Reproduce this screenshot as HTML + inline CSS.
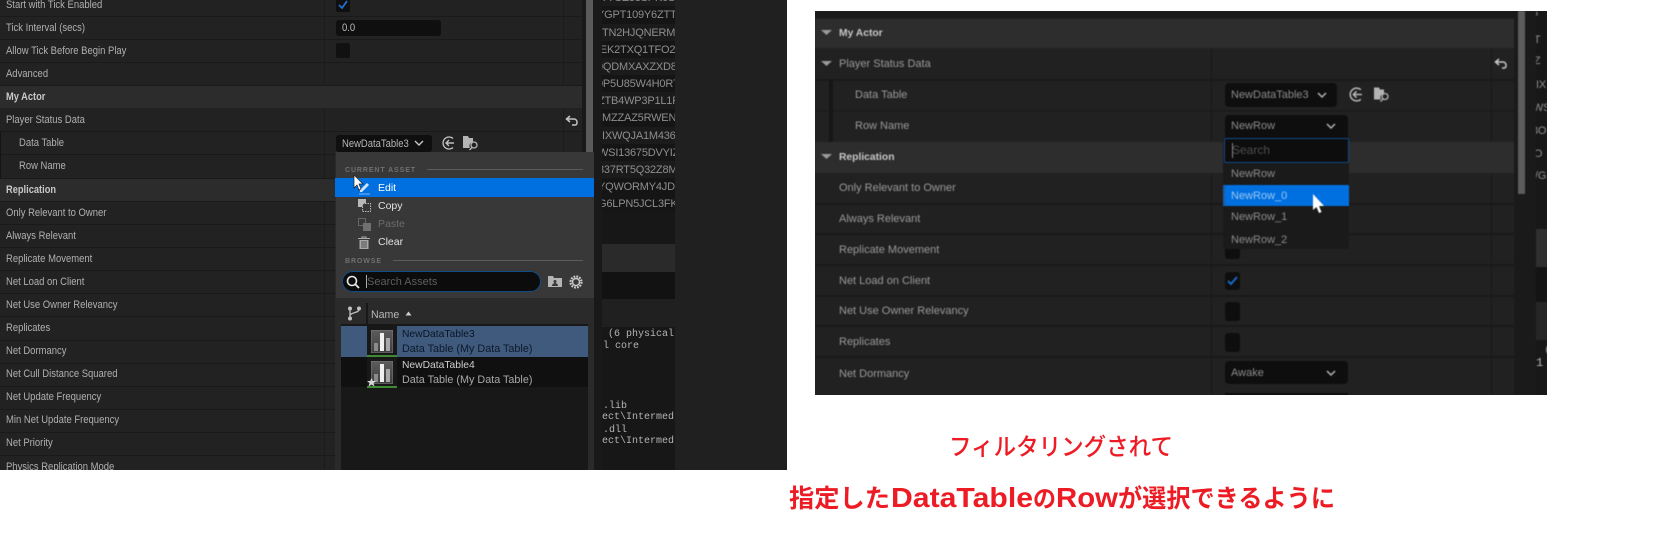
<!DOCTYPE html>
<html lang="ja"><head><meta charset="utf-8"><title>DataTable Row</title>
<style>
html,body{margin:0;padding:0;background:#fff;width:1657px;height:548px;overflow:hidden}
.layer{position:absolute;left:0;top:0;width:1657px;height:548px;font-family:"Liberation Sans","Noto Sans CJK JP",sans-serif}
#L{clip-path:inset(0 870px 78px 0);filter:blur(.35px);background:#222;font-size:11px;color:#b0b0b0}
#R{clip-path:inset(11px 110px 153px 815px);filter:blur(.6px);background:#212121;font-size:11px;color:#9a9a9a}
.b,.t,svg.i{position:absolute}
.t{white-space:nowrap;line-height:0;height:0}
#L .t{transform:scaleX(.86);transform-origin:0 0;margin-top:.7px}
#L .t.n{transform:none;margin-top:0}
#L .s{font-size:10.8px}
#R .s{font-size:10.3px}
.s{font-weight:bold;color:#c8c8c8}
.h{font-size:7px;font-weight:bold;letter-spacing:.9px;color:#707070}
.m{color:#e2e2e2;font-size:10.5px}
.lg{font-size:11px;color:#8e8e8e;letter-spacing:-.2px}
.mono{font-family:"Liberation Mono",monospace;font-size:10px;color:#b4b4b4}
#R .v{color:#8c8c8c}
</style></head><body>

<div class="layer" id="L">
<!-- rows -->
<div class="b" style="left:0;top:85px;width:582px;height:23px;background:#2c2c2c"></div>
<div class="b" style="left:0;top:178px;width:582px;height:23px;background:#2c2c2c"></div>
<div class="b" style="left:0;top:16px;width:582px;height:1px;background:#1a1a1a"></div>
<div class="b" style="left:0;top:39px;width:582px;height:1px;background:#1a1a1a"></div>
<div class="b" style="left:0;top:62px;width:582px;height:1px;background:#1a1a1a"></div>
<div class="b" style="left:0;top:85px;width:582px;height:1px;background:#1a1a1a"></div>
<div class="b" style="left:0;top:131px;width:582px;height:1px;background:#1a1a1a"></div>
<div class="b" style="left:0;top:154px;width:582px;height:1px;background:#1a1a1a"></div>
<div class="b" style="left:0;top:178px;width:582px;height:1px;background:#1a1a1a"></div>
<div class="b" style="left:0;top:201px;width:582px;height:1px;background:#1a1a1a"></div>
<div class="b" style="left:0;top:224px;width:582px;height:1px;background:#1a1a1a"></div>
<div class="b" style="left:0;top:247px;width:582px;height:1px;background:#1a1a1a"></div>
<div class="b" style="left:0;top:270px;width:582px;height:1px;background:#1a1a1a"></div>
<div class="b" style="left:0;top:293px;width:582px;height:1px;background:#1a1a1a"></div>
<div class="b" style="left:0;top:316px;width:582px;height:1px;background:#1a1a1a"></div>
<div class="b" style="left:0;top:340px;width:582px;height:1px;background:#1a1a1a"></div>
<div class="b" style="left:0;top:363px;width:582px;height:1px;background:#1a1a1a"></div>
<div class="b" style="left:0;top:386px;width:582px;height:1px;background:#1a1a1a"></div>
<div class="b" style="left:0;top:409px;width:582px;height:1px;background:#1a1a1a"></div>
<div class="b" style="left:0;top:432px;width:582px;height:1px;background:#1a1a1a"></div>
<div class="b" style="left:0;top:455px;width:582px;height:1px;background:#1a1a1a"></div>
<div class="b" style="left:324px;top:0;width:1px;height:85px;background:#1b1b1b"></div>
<div class="b" style="left:324px;top:108px;width:1px;height:70px;background:#1b1b1b"></div>
<div class="b" style="left:324px;top:201px;width:1px;height:270px;background:#1b1b1b"></div>
<div class="b" style="left:563px;top:0;width:1px;height:85px;background:#1b1b1b"></div>
<div class="b" style="left:563px;top:108px;width:1px;height:46px;background:#1b1b1b"></div>
<div class="b" style="left:0;top:132px;width:1px;height:46px;background:#141414"></div>
<div class="t" style="left:6px;top:4px">Start with Tick Enabled</div>
<div class="t" style="left:6px;top:27px">Tick Interval (secs)</div>
<div class="t" style="left:6px;top:50px">Allow Tick Before Begin Play</div>
<div class="t" style="left:6px;top:73px">Advanced</div>
<div class="t s" style="left:6px;top:96.5px">My Actor</div>
<div class="t" style="left:6px;top:119.5px">Player Status Data</div>
<div class="t" style="left:19px;top:142.5px">Data Table</div>
<div class="t" style="left:19px;top:165.5px">Row Name</div>
<div class="t s" style="left:6px;top:189px">Replication</div>
<div class="t" style="left:6px;top:212px">Only Relevant to Owner</div>
<div class="t" style="left:6px;top:235px">Always Relevant</div>
<div class="t" style="left:6px;top:258px">Replicate Movement</div>
<div class="t" style="left:6px;top:281px">Net Load on Client</div>
<div class="t" style="left:6px;top:304px">Net Use Owner Relevancy</div>
<div class="t" style="left:6px;top:327px">Replicates</div>
<div class="t" style="left:6px;top:350px">Net Dormancy</div>
<div class="t" style="left:6px;top:373.5px">Net Cull Distance Squared</div>
<div class="t" style="left:6px;top:396.5px">Net Update Frequency</div>
<div class="t" style="left:6px;top:419.5px">Min Net Update Frequency</div>
<div class="t" style="left:6px;top:442.5px">Net Priority</div>
<div class="t" style="left:6px;top:466px">Physics Replication Mode</div>
<!-- value widgets -->
<div class="b" style="left:336px;top:-3px;width:14px;height:15px;background:#0f0f0f;border-radius:2px"></div>
<svg class="i" style="left:337px;top:-1px" width="12" height="12" viewBox="0 0 12 12"><path d="M2 6l3 3 5-7" fill="none" stroke="#1f70d0" stroke-width="1.8"/></svg>
<div class="b" style="left:336px;top:20px;width:105px;height:16px;background:#0f0f0f;border-radius:3px"></div>
<div class="t" style="left:342px;top:27.5px;color:#bdbdbd">0.0</div>
<div class="b" style="left:336px;top:43px;width:14px;height:15px;background:#111;border-radius:2px"></div>
<div class="b" style="left:336px;top:135px;width:96px;height:17px;background:#0f0f0f;border-radius:3px"></div>
<div class="t" style="left:342px;top:143px;color:#b6b6b6">NewDataTable3</div>
<svg class="i" style="left:413px;top:139px" width="12" height="9" viewBox="0 0 12 9"><path d="M2 2l4 4 4-4" fill="none" stroke="#c8c8c8" stroke-width="1.4"/></svg>
<svg class="i" style="left:440px;top:135px" width="16" height="16" viewBox="0 0 16 16"><path d="M13 3.500A6 6 0 1 0 13 12.500" fill="none" stroke="#c0c0c0" stroke-width="1.3"/><path d="M14 8H6M9 5L6 8l3 3" fill="none" stroke="#c0c0c0" stroke-width="1.4"/></svg>
<svg class="i" style="left:462px;top:135px" width="17" height="17" viewBox="0 0 17 17"><path d="M1 1h5l1 2h4v4a4 4 0 0 0-3 6H1z" fill="#b4b4b4"/><circle cx="12" cy="10" r="3" fill="none" stroke="#b4b4b4" stroke-width="1.3"/><path d="M10 12.500L7.500 15" stroke="#b4b4b4" stroke-width="1.3"/></svg>
<svg class="i" style="left:565px;top:115px" width="14" height="12" viewBox="0 0 14 12"><path d="M5 1L1.500 4 5 7" fill="none" stroke="#c4c4c4" stroke-width="1.500"/><path d="M2 4h7a3 3 0 0 1 3 3v1a2 2 0 0 1-2 2H7" fill="none" stroke="#c4c4c4" stroke-width="1.500"/></svg>
<!-- scrollbar & log -->
<div class="b" style="left:582px;top:0;width:20px;height:470px;background:#191919"></div>
<div class="b" style="left:586px;top:0;width:7px;height:470px;background:#5a5a5a"></div>
<div class="b" style="left:675px;top:0;width:112px;height:470px;background:#202020"></div>
<div class="b" style="left:602px;top:0;width:73px;height:212px;background:#151515;overflow:hidden">
<div class="b" style="left:0;top:0;width:73px;height:6px;background:#1b1b1b"></div>
<div class="b" style="left:0;top:24px;width:73px;height:17px;background:#1b1b1b"></div>
<div class="b" style="left:0;top:58px;width:73px;height:17px;background:#1b1b1b"></div>
<div class="b" style="left:0;top:92px;width:73px;height:17px;background:#1b1b1b"></div>
<div class="b" style="left:0;top:127px;width:73px;height:17px;background:#1b1b1b"></div>
<div class="b" style="left:0;top:161px;width:73px;height:17px;background:#1b1b1b"></div>
<div class="t n lg" style="left:-4px;top:-2px">ITTGZ83SPK6S</div>
<div class="t n lg" style="left:-5px;top:15px">YGPT109Y6ZTTX</div>
<div class="t n lg" style="left:0;top:33px">TN2HJQNERMIA</div>
<div class="t n lg" style="left:-5px;top:50px">IEK2TXQ1TFO2A</div>
<div class="t n lg" style="left:-5px;top:67px">9QDMXAXZXD8L</div>
<div class="t n lg" style="left:-5px;top:84px">0P5U85W4H0R7K</div>
<div class="t n lg" style="left:-4px;top:101px">ZTB4WP3P1L1FV</div>
<div class="t n lg" style="left:0;top:118px">MZZAZ5RWENNK</div>
<div class="t n lg" style="left:0;top:136px">IXWQJA1M436L</div>
<div class="t n lg" style="left:-4px;top:153px">WSI13675DVYIZA</div>
<div class="t n lg" style="left:-4px;top:170px">337RT5Q32Z8MA</div>
<div class="t n lg" style="left:-4px;top:187px">YQWORMY4JDCL</div>
<div class="t n lg" style="left:-4px;top:204px">G6LPN5JCL3FK</div>
</div>
<div class="b" style="left:602px;top:212px;width:73px;height:258px;background:#171717"></div>
<div class="b" style="left:602px;top:244px;width:73px;height:28px;background:#2a2a2a"></div>
<div class="b" style="left:602px;top:272px;width:73px;height:27px;background:#121212"></div>
<div class="b" style="left:602px;top:299px;width:73px;height:28px;background:#202020"></div>
<div class="b" style="left:602px;top:327px;width:73px;height:143px;overflow:hidden">
<div class="t n mono" style="left:6px;top:7.5px">(6 physical</div>
<div class="t n mono" style="left:1px;top:19.5px">l core</div>
<div class="t n mono" style="left:1px;top:79.5px">.lib</div>
<div class="t n mono" style="left:0;top:91px">ect\Intermed</div>
<div class="t n mono" style="left:1px;top:103.5px">.dll</div>
<div class="t n mono" style="left:0;top:115px">ect\Intermed</div>
</div>
<!-- popup -->
<div class="b" style="left:335px;top:152px;width:259px;height:318px;background:#383838;border-left:1px solid #2a2a2a;box-sizing:border-box"></div>
<div class="t n h" style="left:345px;top:170.5px">CURRENT ASSET</div>
<div class="b" style="left:427px;top:169px;width:156px;height:1px;background:#5c5c5c"></div>
<div class="b" style="left:335px;top:178px;width:259px;height:19px;background:#0070e0"></div>
<svg class="i" style="left:358px;top:181px" width="14" height="14" viewBox="0 0 14 14"><path d="M2 9l7-7 2 2-7 7H2z" fill="#cfe3fa"/><path d="M1 13h11" stroke="#7fb4ee" stroke-width="1"/></svg>
<div class="t n m" style="left:378px;top:188px;color:#fff">Edit</div>
<svg class="i" style="left:358px;top:199px" width="13" height="13" viewBox="0 0 13 13"><rect x="0" y="0" width="8" height="8" fill="#b8b8b8"/><rect x="4.500" y="4.500" width="8" height="8" fill="#383838" stroke="#b8b8b8" stroke-dasharray="1.500 1"/></svg>
<div class="t n m" style="left:378px;top:206px">Copy</div>
<svg class="i" style="left:358px;top:218px" width="13" height="13" viewBox="0 0 13 13"><rect x=".5" y=".5" width="7" height="7" fill="none" stroke="#666"/><rect x="5" y="5" width="8" height="8" fill="#707070"/></svg>
<div class="t n m" style="left:378px;top:224px;color:#6c6c6c">Paste</div>
<svg class="i" style="left:358px;top:236px" width="12" height="13" viewBox="0 0 12 13"><path d="M0 2.500h12M4 2.500V1h4v1.500" fill="none" stroke="#a8a8a8"/><path d="M1.500 4h9v9h-9z" fill="#a8a8a8"/><path d="M4 5v7M6 5v7M8 5v7" stroke="#383838" stroke-width=".8"/></svg>
<div class="t n m" style="left:378px;top:242px">Clear</div>
<div class="t n h" style="left:345px;top:261.5px">BROWSE</div>
<div class="b" style="left:393px;top:260px;width:190px;height:1px;background:#5c5c5c"></div>
<div class="b" style="left:342px;top:271px;width:199px;height:21px;background:#0c0c0c;border:1px solid #0f4a8a;border-radius:11px;box-sizing:border-box"></div>
<svg class="i" style="left:346px;top:275px" width="14" height="14" viewBox="0 0 14 14"><circle cx="6" cy="6" r="4.500" fill="none" stroke="#e8e8e8" stroke-width="1.600"/><path d="M9.500 9.500L13 13" stroke="#e8e8e8" stroke-width="1.800"/></svg>
<div class="b" style="left:366px;top:275px;width:1px;height:13px;background:#aaa"></div>
<div class="t n" style="left:367px;top:281.5px;color:#5e5e5e;font-size:11px">Search Assets</div>
<svg class="i" style="left:548px;top:275px" width="14" height="12" viewBox="0 0 14 12"><path d="M0 1h5l1 2h8v9H0z" fill="#b4b4b4"/><circle cx="7" cy="6.500" r="1.500" fill="#383838"/><path d="M4 11a3 3 0 0 1 6 0z" fill="#383838"/></svg>
<svg class="i" style="left:569px;top:275px" width="14" height="14" viewBox="0 0 14 14"><circle cx="7" cy="7" r="3.500" fill="none" stroke="#c8c8c8" stroke-width="1.500"/><circle cx="7" cy="7" r="5.500" fill="none" stroke="#c8c8c8" stroke-width="2.200" stroke-dasharray="1.800 1.100"/></svg>
<div class="b" style="left:336px;top:298px;width:258px;height:172px;background:#2a2a2a"></div>
<div class="b" style="left:341px;top:303px;width:247px;height:167px;background:#181818"></div>
<div class="b" style="left:341px;top:303px;width:25px;height:21px;background:#2a2a2a"></div>
<div class="b" style="left:368px;top:303px;width:220px;height:21px;background:#2a2a2a"></div>
<svg class="i" style="left:347px;top:306px" width="15" height="15" viewBox="0 0 15 15"><circle cx="3" cy="2.500" r="2" fill="#c0c0c0"/><circle cx="3" cy="12.500" r="2" fill="#c0c0c0"/><circle cx="12" cy="2.500" r="2" fill="#c0c0c0"/><path d="M3 3v8M12 3c0 4-6 3-9 6" fill="none" stroke="#c0c0c0" stroke-width="1.300"/></svg>
<div class="t n" style="left:371px;top:315px;color:#b8b8b8;font-size:10.6px">Name</div>
<svg class="i" style="left:405px;top:311px" width="7" height="5" viewBox="0 0 7 5"><path d="M.5 4.500L3.500.5l3 4z" fill="#cfcfcf"/></svg>
<div class="b" style="left:341px;top:326px;width:247px;height:31px;background:#3f5a7d"></div>
<div class="b" style="left:341px;top:357px;width:247px;height:30px;background:#101010"></div>
<div class="b" style="left:367px;top:326px;width:30px;height:31px;background:#181818"></div>
<div class="b" style="left:367px;top:357px;width:30px;height:30px;background:#181818"></div>
<div class="b" style="left:367px;top:355px;width:30px;height:2px;background:#3e8a33"></div>
<div class="b" style="left:367px;top:386px;width:30px;height:2px;background:#3e8a33"></div>
<svg class="i" style="left:371px;top:330px" width="22" height="23" viewBox="0 0 22 23"><defs><linearGradient id="g" x1="0" y1="0" x2="0" y2="1"><stop offset="0" stop-color="#5c5c5c"/><stop offset="1" stop-color="#3e3e3e"/></linearGradient></defs><rect width="22" height="23" fill="url(#g)" stroke="#7a7a7a"/><rect x="3" y="13" width="4" height="8" fill="#8a8a8a"/><rect x="9" y="3" width="4" height="18" fill="#f0f0f0"/><rect x="15" y="8" width="4" height="13" fill="#a8a8a8"/></svg>
<svg class="i" style="left:371px;top:361px" width="22" height="23" viewBox="0 0 22 23"><rect width="22" height="23" fill="url(#g)" stroke="#7a7a7a"/><rect x="3" y="13" width="4" height="8" fill="#8a8a8a"/><rect x="9" y="3" width="4" height="18" fill="#f0f0f0"/><rect x="15" y="8" width="4" height="13" fill="#a8a8a8"/></svg>
<svg class="i" style="left:367px;top:378px" width="9" height="9" viewBox="0 0 9 9"><path d="M4.500 0l1.300 3H9L6.500 5l1 3.500-3-2-3 2 1-3.500L0 3h3.200z" fill="#d8d8d8"/></svg>
<div class="t n" style="left:402px;top:335px;color:#0a1524;font-size:10.3px">NewDataTable3</div>
<div class="t n" style="left:402px;top:349px;color:#0e1a2b;font-size:10.8px">Data Table (My Data Table)</div>
<div class="t n" style="left:402px;top:366px;color:#d0d0d0;font-size:10.3px">NewDataTable4</div>
<div class="t n" style="left:402px;top:380px;color:#a8a8a8;font-size:10.8px">Data Table (My Data Table)</div>
<!-- cursor -->
<svg class="i" style="left:353px;top:174px" width="12" height="18" viewBox="0 0 12 18"><path d="M1 1v13l3-3 2 5 2-1-2-5h4z" fill="#fff" stroke="#222" stroke-width=".7"/></svg>
</div>

<div class="layer" id="R">
<div class="b" style="left:815px;top:11px;width:732px;height:7px;background:#1a1a1a"></div>
<div class="b" style="left:815px;top:19px;width:699px;height:29px;background:#2d2d2d"></div>
<div class="b" style="left:815px;top:142px;width:699px;height:31px;background:#2d2d2d"></div>
<div class="b" style="left:815px;top:79px;width:699px;height:2px;background:#191919"></div>
<div class="b" style="left:815px;top:110px;width:699px;height:2px;background:#1c1c1c"></div>
<div class="b" style="left:815px;top:203px;width:699px;height:2px;background:#191919"></div>
<div class="b" style="left:815px;top:233px;width:699px;height:2px;background:#191919"></div>
<div class="b" style="left:815px;top:264px;width:699px;height:2px;background:#191919"></div>
<div class="b" style="left:815px;top:295px;width:699px;height:2px;background:#191919"></div>
<div class="b" style="left:815px;top:325px;width:699px;height:2px;background:#191919"></div>
<div class="b" style="left:815px;top:356px;width:699px;height:2px;background:#191919"></div>
<div class="b" style="left:829px;top:80px;width:4px;height:62px;background:#161616"></div>
<div class="b" style="left:1211px;top:48px;width:1px;height:94px;background:#191919"></div>
<div class="b" style="left:1211px;top:173px;width:1px;height:222px;background:#191919"></div>
<div class="b" style="left:1491px;top:48px;width:1px;height:94px;background:#191919"></div>
<div class="b" style="left:1491px;top:173px;width:1px;height:222px;background:#191919"></div>
<svg class="i" style="left:821px;top:30px" width="11" height="6" viewBox="0 0 11 6"><path d="M0 0h11L5.500 5z" fill="#9a9a9a"/></svg>
<svg class="i" style="left:821px;top:61px" width="11" height="6" viewBox="0 0 11 6"><path d="M0 0h11L5.500 5z" fill="#9a9a9a"/></svg>
<svg class="i" style="left:821px;top:154px" width="11" height="6" viewBox="0 0 11 6"><path d="M0 0h11L5.500 5z" fill="#9a9a9a"/></svg>
<div class="t s" style="left:839px;top:33.5px">My Actor</div>
<div class="t" style="left:839px;top:64px">Player Status Data</div>
<div class="t" style="left:855px;top:95px">Data Table</div>
<div class="t" style="left:855px;top:126px">Row Name</div>
<div class="t s" style="left:839px;top:157.5px">Replication</div>
<div class="t" style="left:839px;top:188px">Only Relevant to Owner</div>
<div class="t" style="left:839px;top:219px">Always Relevant</div>
<div class="t" style="left:839px;top:250px">Replicate Movement</div>
<div class="t" style="left:839px;top:281px">Net Load on Client</div>
<div class="t" style="left:839px;top:311px">Net Use Owner Relevancy</div>
<div class="t" style="left:839px;top:342px">Replicates</div>
<div class="t" style="left:839px;top:373.5px">Net Dormancy</div>
<!-- scrollbar, gutter, log -->
<div class="b" style="left:1514px;top:11px;width:22px;height:384px;background:#1a1a1a"></div>
<div class="b" style="left:1518px;top:11px;width:7px;height:183px;background:#5c5c5c"></div>
<div class="b" style="left:1536px;top:11px;width:11px;height:384px;background:#181818;overflow:hidden">
<div class="t lg" style="left:-5px;top:5px">P</div>
<div class="t lg" style="left:-5px;top:29px">.T</div>
<div class="t lg" style="left:-5px;top:50px">/Z</div>
<div class="t lg" style="left:0;top:74px">IX</div>
<div class="t lg" style="left:-3px;top:97px">WS</div>
<div class="t lg" style="left:-4px;top:120px">3O</div>
<div class="t lg" style="left:-4px;top:143px">'O</div>
<div class="t lg" style="left:-1px;top:165px">/G</div>
<div class="b" style="left:0;top:218px;width:11px;height:38px;background:#2f2f2f"></div>
<div class="b" style="left:0;top:256px;width:11px;height:35px;background:#141414"></div>
<div class="b" style="left:0;top:291px;width:11px;height:38px;background:#262626"></div>
<div class="t mono" style="left:8px;top:339px;font-size:12px">(</div>
<div class="t mono" style="left:0;top:352px;font-size:12px">1</div>
</div>
<svg class="i" style="left:1494px;top:58px" width="14" height="12" viewBox="0 0 14 12"><path d="M5 1L1.500 4 5 7" fill="none" stroke="#c8c8c8" stroke-width="1.500"/><path d="M2 4h7a3 3 0 0 1 3 3v1a2 2 0 0 1-2 2H8" fill="none" stroke="#c8c8c8" stroke-width="1.500"/></svg>
<!-- widgets -->
<div class="b" style="left:1225px;top:83px;width:112px;height:24px;background:#0e0e0e;border-radius:4px"></div>
<div class="t v" style="left:1231px;top:94.5px">NewDataTable3</div>
<svg class="i" style="left:1316px;top:91px" width="12" height="8" viewBox="0 0 12 8"><path d="M2 2l4 4 4-4" fill="none" stroke="#b4b4b4" stroke-width="1.500"/></svg>
<svg class="i" style="left:1347px;top:86px" width="17" height="17" viewBox="0 0 16 16"><path d="M13 3.500A6 6 0 1 0 13 12.500" fill="none" stroke="#b8b8b8" stroke-width="1.400"/><path d="M14 8H6M9 5L6 8l3 3" fill="none" stroke="#b8b8b8" stroke-width="1.400"/></svg>
<svg class="i" style="left:1373px;top:86px" width="17" height="18" viewBox="0 0 17 17"><path d="M1 1h5l1 2h4v4a4 4 0 0 0-3 6H1z" fill="#b4b4b4"/><circle cx="12" cy="10" r="3" fill="none" stroke="#b4b4b4" stroke-width="1.300"/><path d="M10 12.500L7.500 15" stroke="#b4b4b4" stroke-width="1.300"/></svg>
<div class="b" style="left:1225px;top:115px;width:123px;height:23px;background:#0e0e0e;border-radius:4px 4px 0 0"></div>
<div class="t v" style="left:1231px;top:125.5px">NewRow</div>
<svg class="i" style="left:1325px;top:122px" width="12" height="8" viewBox="0 0 12 8"><path d="M2 2l4 4 4-4" fill="none" stroke="#b4b4b4" stroke-width="1.500"/></svg>
<div class="b" style="left:1223px;top:138px;width:126px;height:111px;background:#1a1a1a"></div>
<div class="b" style="left:1224px;top:138px;width:125px;height:25px;background:#0d0d0d;border:1px solid #0f4a8a;box-sizing:border-box;border-radius:2px"></div>
<div class="b" style="left:1232px;top:143px;width:1px;height:15px;background:#888"></div>
<div class="t" style="left:1232px;top:150px;color:#4e4e4e;font-size:12px">Search</div>
<div class="t v" style="left:1231px;top:174px">NewRow</div>
<div class="b" style="left:1223px;top:185px;width:126px;height:21px;background:#0070e0"></div>
<div class="b" style="left:1223px;top:185px;width:2px;height:21px;background:#1b5da8"></div>
<div class="t" style="left:1231px;top:195.7px;color:#9cc6f2">NewRow_0</div>
<div class="t v" style="left:1231px;top:217px">NewRow_1</div>
<div class="t v" style="left:1231px;top:239.7px">NewRow_2</div>
<div class="b" style="left:1225px;top:249px;width:15px;height:10px;background:#0e0e0e;border-radius:0 0 3px 3px"></div>
<div class="b" style="left:1225px;top:272px;width:15px;height:18px;background:#0e0e0e;border-radius:3px"></div>
<svg class="i" style="left:1226px;top:274px" width="13" height="13" viewBox="0 0 13 13"><path d="M2 7l3 3 6-7" fill="none" stroke="#1868c4" stroke-width="2"/></svg>
<div class="b" style="left:1225px;top:302px;width:15px;height:19px;background:#0e0e0e;border-radius:3px"></div>
<div class="b" style="left:1225px;top:333px;width:15px;height:19px;background:#0e0e0e;border-radius:3px"></div>
<div class="b" style="left:1225px;top:361px;width:123px;height:23px;background:#0e0e0e;border-radius:4px"></div>
<div class="t v" style="left:1231px;top:373.2px">Awake</div>
<svg class="i" style="left:1325px;top:369px" width="12" height="8" viewBox="0 0 12 8"><path d="M2 2l4 4 4-4" fill="none" stroke="#b4b4b4" stroke-width="1.500"/></svg>
<div class="b" style="left:1225px;top:393px;width:123px;height:3px;background:#0e0e0e"></div>
<svg class="i" style="left:1312px;top:194px" width="14" height="22" viewBox="0 0 14 22"><path d="M1 0v16l3.500-3 2.500 6 2.500-1-2.500-6H12z" fill="#fff"/></svg>
</div>

<svg class="layer" width="1657" height="548" viewBox="0 0 1657 548" style="font-family:'Liberation Sans','Noto Sans CJK JP',sans-serif;fill:#ed1c24">
<text x="949" y="455" font-size="24" textLength="224" lengthAdjust="spacingAndGlyphs" font-weight="500">フィルタリングされて</text>
<text x="789" y="507" font-size="25" font-weight="700" textLength="101" lengthAdjust="spacingAndGlyphs">指定した</text>
<text x="891" y="507" font-size="28" font-weight="700" textLength="142" lengthAdjust="spacingAndGlyphs">DataTable</text>
<text x="1033" y="507" font-size="24" font-weight="700" textLength="23" lengthAdjust="spacingAndGlyphs">の</text>
<text x="1056" y="507" font-size="28" font-weight="700" textLength="62" lengthAdjust="spacingAndGlyphs">Row</text>
<text x="1118" y="507" font-size="25" font-weight="700" textLength="217" lengthAdjust="spacingAndGlyphs">が選択できるように</text>
</svg>
</body></html>
